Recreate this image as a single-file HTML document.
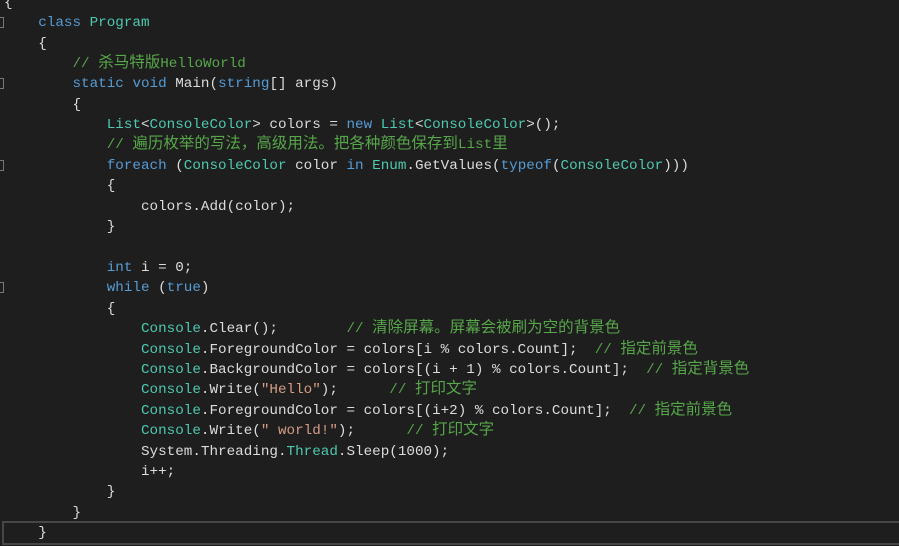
<!DOCTYPE html><html><head><meta charset="utf-8"><style>
body{margin:0;width:899px;height:546px;background:#1e1e1e;overflow:hidden;position:relative;font-family:"Liberation Mono","Noto Sans CJK SC",monospace;font-size:14.27px;color:#dcdcdc}
.l{position:absolute;left:4px;height:20px;line-height:20px;white-space:pre}
.k{color:#569cd6}.t{color:#4ec9b0}.c{color:#57a64a}.s{color:#d69d85}
.z{font-family:"Noto Sans CJK SC",sans-serif;font-size:15.5px;line-height:0}
.cur{position:absolute;left:2px;top:521px;width:895px;height:20px;border:2px solid #464646;border-right:none}
.f{position:absolute;left:0;width:3px;height:9px;border:1px solid #777;border-left:none}
</style></head><body>
<div class="cur"></div>
<div class="f" style="top:17px"></div><div class="f" style="top:78px"></div><div class="f" style="top:160px"></div><div class="f" style="top:282px"></div>
<div class="l" style="top:-7px">{</div>
<div class="l" style="top:13px">    <span class="k">class</span> <span class="t">Program</span></div>
<div class="l" style="top:34px">    {</div>
<div class="l" style="top:54px">        <span class="c">// <span class="z">杀马特版</span>HelloWorld</span></div>
<div class="l" style="top:74px">        <span class="k">static</span> <span class="k">void</span> Main(<span class="k">string</span>[] args)</div>
<div class="l" style="top:95px">        {</div>
<div class="l" style="top:115px">            <span class="t">List</span>&lt;<span class="t">ConsoleColor</span>&gt; colors = <span class="k">new</span> <span class="t">List</span>&lt;<span class="t">ConsoleColor</span>&gt;();</div>
<div class="l" style="top:135px">            <span class="c">// <span class="z">遍历枚举的写法，高级用法。把各种颜色保存到</span>List<span class="z">里</span></span></div>
<div class="l" style="top:156px">            <span class="k">foreach</span> (<span class="t">ConsoleColor</span> color <span class="k">in</span> <span class="t">Enum</span>.GetValues(<span class="k">typeof</span>(<span class="t">ConsoleColor</span>)))</div>
<div class="l" style="top:176px">            {</div>
<div class="l" style="top:197px">                colors.Add(color);</div>
<div class="l" style="top:217px">            }</div>
<div class="l" style="top:258px">            <span class="k">int</span> i = 0;</div>
<div class="l" style="top:278px">            <span class="k">while</span> (<span class="k">true</span>)</div>
<div class="l" style="top:299px">            {</div>
<div class="l" style="top:319px">                <span class="t">Console</span>.Clear();        <span class="c">// <span class="z">清除屏幕。屏幕会被刷为空的背景色</span></span></div>
<div class="l" style="top:340px">                <span class="t">Console</span>.ForegroundColor = colors[i % colors.Count];  <span class="c">// <span class="z">指定前景色</span></span></div>
<div class="l" style="top:360px">                <span class="t">Console</span>.BackgroundColor = colors[(i + 1) % colors.Count];  <span class="c">// <span class="z">指定背景色</span></span></div>
<div class="l" style="top:380px">                <span class="t">Console</span>.Write(<span class="s">"Hello"</span>);      <span class="c">// <span class="z">打印文字</span></span></div>
<div class="l" style="top:401px">                <span class="t">Console</span>.ForegroundColor = colors[(i+2) % colors.Count];  <span class="c">// <span class="z">指定前景色</span></span></div>
<div class="l" style="top:421px">                <span class="t">Console</span>.Write(<span class="s">" world!"</span>);      <span class="c">// <span class="z">打印文字</span></span></div>
<div class="l" style="top:442px">                System.Threading.<span class="t">Thread</span>.Sleep(1000);</div>
<div class="l" style="top:462px">                i++;</div>
<div class="l" style="top:482px">            }</div>
<div class="l" style="top:503px">        }</div>
<div class="l" style="top:523px">    }</div>
</body></html>
